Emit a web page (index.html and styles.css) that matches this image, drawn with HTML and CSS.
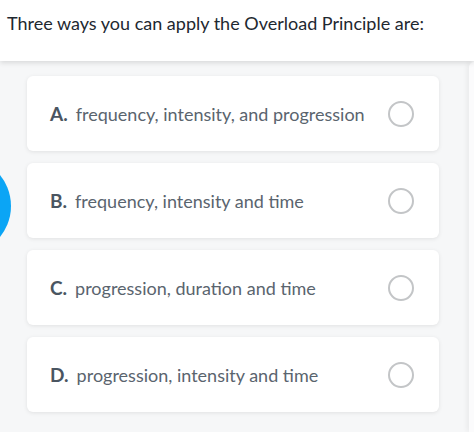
FILE: index.html
```html
<!DOCTYPE html>
<html>
<head>
<meta charset="utf-8">
<link rel="stylesheet" href="styles.css">
</head>
<body>
<header class="question">
  <h1 class="question-text">Three ways you can apply the Overload Principle are:</h1>
</header>
<div class="side-panel"></div>
<svg class="blue-dot" width="12" height="66" viewBox="0 0 12 66"><circle cx="-38" cy="33" r="49" fill="#0ba5f5"/></svg>
<main class="options">
  <div class="option"><span class="letter">A.</span><span class="answer">frequency, intensity, and progression</span><span class="radio"></span></div>
  <div class="option"><span class="letter">B.</span><span class="answer">frequency, intensity and time</span><span class="radio"></span></div>
  <div class="option"><span class="letter">C.</span><span class="answer">progression, duration and time</span><span class="radio"></span></div>
  <div class="option"><span class="letter">D.</span><span class="answer">progression, intensity and time</span><span class="radio"></span></div>
</main>
</body>
</html>
```
FILE: styles.css
```css
html, body {
  margin: 0;
  padding: 0;
}
body {
  width: 474px;
  height: 432px;
  overflow: hidden;
  background: #f6f7f8;
  font-family: Lato, "Noto Sans", sans-serif;
  position: relative;
}
.question {
  height: 61px;
  background: #ffffff;
  box-shadow: 0 2px 5px rgba(0, 0, 0, 0.12);
  position: relative;
  z-index: 2;
  box-sizing: border-box;
  padding: 10px 0 0 7px;
}
.question-text {
  margin: 0;
  font-size: 18px;
  font-weight: 400;
  color: #1e2830;
  line-height: 26px;
}
.side-panel {
  position: absolute;
  left: 469px;
  top: 62px;
  width: 5px;
  height: 370px;
  background: #fbfbfc;
  border-radius: 8px 0 0 0;
  box-shadow: -2px 0 5px rgba(0, 0, 0, 0.06);
}
.blue-dot {
  position: absolute;
  left: 0;
  top: 173px;
  display: block;
}
.options {
  display: flex;
  flex-direction: column;
  gap: 12px;
  padding: 15px 0 0 27px;
}
.option {
  width: 412px;
  height: 75px;
  box-sizing: border-box;
  background: #ffffff;
  border-radius: 6px;
  box-shadow: 0 1px 4px rgba(0, 0, 0, 0.09);
  display: flex;
  align-items: center;
  padding: 0 25px 0 23px;
}
.letter {
  font-weight: 700;
  font-size: 19px;
  color: #4a5561;
  margin-right: 8px;
}
.answer {
  font-size: 18px;
  color: #5a646e;
  flex: 1;
}
.radio {
  width: 22px;
  height: 22px;
  border: 2.5px solid #c3c5c7;
  border-radius: 50%;
  flex: none;
}
```
